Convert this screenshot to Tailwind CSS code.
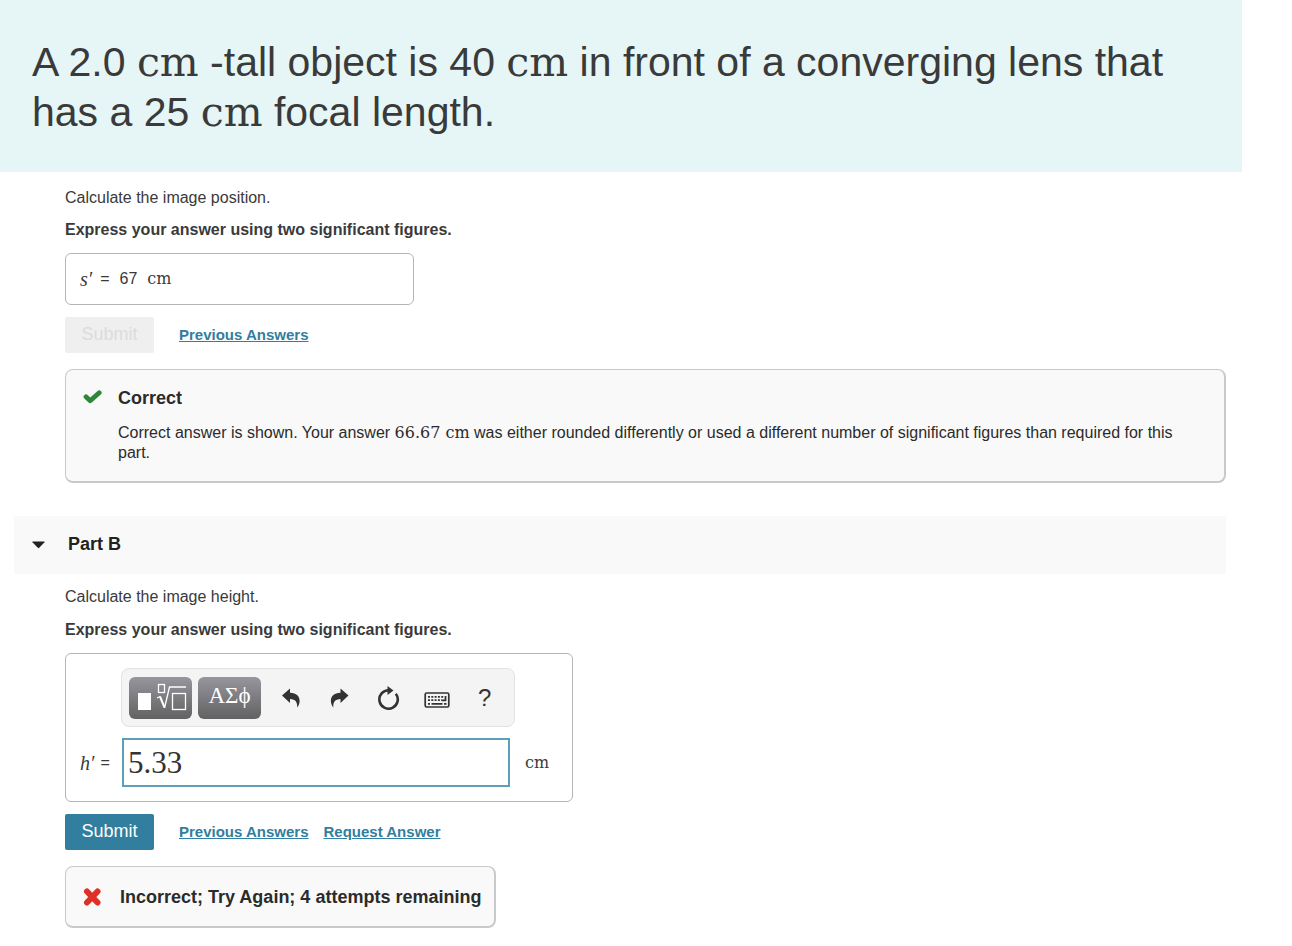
<!DOCTYPE html>
<html lang="en">
<head>
  <meta charset="UTF-8">
  <meta name="viewport" content="width=device-width, initial-scale=1.0">
  <title>Converging lens</title>
  <script src="https://cdn.jsdelivr.net/npm/@tailwindcss/browser@4"></script>
</head>
<body class="bg-white font-['Liberation_Sans',Arial,sans-serif] text-[16px] leading-5 text-[#3a3a3a]">
  <main class="mr-[50px]">
    <!-- Problem statement -->
    <header class="bg-[#e6f6f6] px-8 pt-[37px] pb-[35px]">
      <h1 class="text-[41px] leading-[50px]">A 2.0 <span class="font-['DejaVu_Serif',serif] leading-[0]">cm</span> -tall object is 40 <span class="font-['DejaVu_Serif',serif] leading-[0]">cm</span> in front of a converging lens that has a 25 <span class="font-['DejaVu_Serif',serif] leading-[0]">cm</span> focal length.</h1>
    </header>

    <!-- Part A -->
    <section class="pl-[65px] pr-4 pt-4">
      <p>Calculate the image position.</p>
      <p class="mt-3 font-bold">Express your answer using two significant figures.</p>
      <div class="mt-[13px] flex h-[52px] w-[349px] items-center rounded-md border border-[#b5b5b5] px-[14px]">
        <span class="font-['Liberation_Serif',serif] text-[20px] italic">s′</span>
        <span class="ml-2">=</span>
        <span class="ml-[10px]">67</span>
        <span class="ml-[10px] font-['DejaVu_Serif',serif]">cm</span>
      </div>
      <div class="mt-3 flex items-center">
        <button disabled class="h-9 w-[89px] rounded-xs bg-[#efefef] pb-[2px] text-[18px] text-[#dcdcdc]">Submit</button>
        <a href="#" class="ml-[25px] text-[15px] font-bold text-[#317e9e] underline">Previous Answers</a>
      </div>
      <div class="mt-4 flex rounded-lg border border-r-2 border-b-2 border-[#c9c9c9] bg-[#f9f9f9] pt-[18px] pr-4 pb-[18px] pl-[17px] text-[#2b2b2b]">
        <svg class="mt-[2px] h-[14px] w-[19px] shrink-0" viewBox="0 0 19 14">
          <path d="M3 6.800 7.200 10.800 16.200 2.800" fill="none" stroke="#2e8738" stroke-width="4.800" stroke-linejoin="round" stroke-linecap="round"/>
        </svg>
        <div class="ml-4">
          <h2 class="text-[18px] font-bold">Correct</h2>
          <p class="mt-[15px]">Correct answer is shown. Your answer <span class="font-['DejaVu_Serif',serif] leading-[0]">66.67 cm</span> was either rounded differently or used a different number of significant figures than required for this part.</p>
        </div>
      </div>
    </section>

    <!-- Part B -->
    <section class="pr-4">
      <div class="mt-[33px] ml-[14px] flex h-[58px] items-center bg-[#f9f9f9] pl-[18px] text-[#222]">
        <svg class="h-2 w-[13px]" viewBox="0 0 13 8"><path d="M.8.5h11.4q.8 0 .3.7L7.2 6.8q-.7.7-1.4 0L.5 1.2Q0 .5.8.5Z" fill="#222"/></svg>
        <h2 class="ml-[23px] pb-[2px] text-[18px] font-bold">Part B</h2>
      </div>
      <div class="pt-[13px] pl-[65px]">
        <p>Calculate the image height.</p>
        <p class="mt-[13px] font-bold">Express your answer using two significant figures.</p>
        <div class="mt-[13px] w-[508px] rounded-md border border-[#b5b5b5] pt-[14px] pr-5 pb-[14px] pl-[14px]">
          <div class="ml-[41px] flex h-[59px] w-[394px] items-center rounded-lg border border-[#e2e2e2] bg-[#f4f4f4] pl-[7px] text-[#333]">
            <button aria-label="Templates" class="flex h-[42px] w-[63px] items-center justify-center rounded-md bg-linear-to-b from-[#97969f] to-[#626262]">
              <svg class="h-[42px] w-[63px]" viewBox="0 0 63 42" fill="none" stroke="#fff">
                <rect x="9" y="16" width="13" height="17" fill="#fff" stroke="none"/>
                <rect x="29.500" y="7.500" width="6" height="8" stroke-width="1.300"/>
                <path d="M28 21l3-1.500" stroke-width="1.200"/>
                <path d="M31 19.500l4.500 11" stroke-width="2"/>
                <path d="M35.500 31l5-21H57" stroke-width="1.300"/>
                <rect x="43.500" y="16.500" width="13" height="16" stroke-width="1.300"/>
              </svg>
            </button>
            <button class="ml-[6px] h-[42px] w-[63px] rounded-md bg-linear-to-b from-[#97969f] to-[#626262] pb-1 font-['Liberation_Serif',serif] text-[23px] text-white">ΑΣϕ</button>
            <button aria-label="Undo" class="ml-5">
              <svg class="h-5 w-5" viewBox="0 0 20 20"><path d="M1 7.500 9 .5v4.200C15.500 4.700 19 8.500 18.600 13.500 18.400 16 17.500 17.800 16.200 19.500 16.500 14 14.500 11.300 9 11v4Z" fill="#333"/></svg>
            </button>
            <button aria-label="Redo" class="ml-[28px]">
              <svg class="h-5 w-5" viewBox="0 0 20 20"><path d="M19.500 7.500 11.500.5v4.200C5 4.700 1.500 8.500 1.900 13.500 2.100 16 3 17.800 4.300 19.500 4 14 6 11.300 11.500 11v4Z" fill="#333"/></svg>
            </button>
            <button aria-label="Reset" class="ml-[27px]">
              <svg class="h-6 w-6" viewBox="0 0 24 24"><path d="M13 4.300A9.200 9.200 0 1 0 19.800 7.800" fill="none" stroke="#333" stroke-width="2.600"/><path d="M11.500 0 17.500 4.500 11.500 9Z" fill="#333"/></svg>
            </button>
            <button aria-label="Keyboard" class="ml-6">
              <svg class="mt-1 h-4 w-[26px]" viewBox="0 0 26 16">
                <rect x="1.200" y="1" width="23.600" height="14" rx="1.500" fill="none" stroke="#333" stroke-width="1.700"/>
                <g stroke="#333" stroke-width="1.800" fill="none">
                  <path d="M4 4.800h16" stroke-dasharray="2 1.300"/>
                  <path d="M4 8.200h14" stroke-dasharray="2 1.300"/>
                  <path d="M4 11.800h2M7.500 11.800h11M20 11.800h2.500M21.500 4v5M18 8.300h4"/>
                </g>
              </svg>
            </button>
            <button aria-label="Help" class="ml-[28px] text-[24px]">?</button>
          </div>
          <div class="mt-[11px] flex items-center">
            <label for="height-answer" class="flex w-[42px] items-center"><span class="font-['Liberation_Serif',serif] text-[20px] italic">h′</span><span class="ml-[6px]">=</span></label>
            <input id="height-answer" type="text" value="5.33" class="h-[49px] w-[388px] border-2 border-[#5b9fb9] px-1 font-['Liberation_Serif',serif] text-[31px] text-[#333] outline-none">
            <span class="ml-[15px] font-['DejaVu_Serif',serif]">cm</span>
          </div>
        </div>
        <div class="mt-3 flex items-center">
          <button class="h-9 w-[89px] rounded-xs bg-[#317e9e] pb-[2px] text-[18px] text-white">Submit</button>
          <a href="#" class="ml-[25px] text-[15px] font-bold text-[#317e9e] underline">Previous Answers</a>
          <a href="#" class="ml-[15px] text-[15px] font-bold text-[#317e9e] underline">Request Answer</a>
        </div>
        <div class="mt-4 flex h-[62px] w-[431px] items-center rounded-lg border border-r-2 border-b-2 border-[#c9c9c9] bg-[#f9f9f9] pl-[17px] text-[#2b2b2b]">
          <svg class="h-[18px] w-[19px]" viewBox="0 0 19 18"><path d="M4 3.500 14.500 14.500M14.500 3.500 4 14.500" stroke="#df3026" stroke-width="6" stroke-linecap="round"/></svg>
          <p class="ml-[18px] text-[18px] font-bold whitespace-nowrap">Incorrect; Try Again; 4 attempts remaining</p>
        </div>
      </div>
    </section>
  </main>
</body>
</html>
